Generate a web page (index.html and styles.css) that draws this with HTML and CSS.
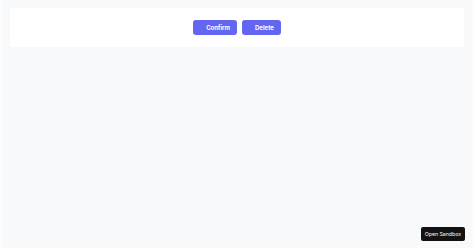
FILE: index.html
```html
<!DOCTYPE html>
<html lang="en">
<head>
  <meta charset="UTF-8">
  <meta name="viewport" content="width=device-width, initial-scale=1.0">
  <title>Buttons</title>
  <link rel="stylesheet" href="styles.css">
</head>
<body>
  <div id="app">
    <div class="card">
      <button class="btn">Confirm</button>
      <button class="btn">Delete</button>
    </div>
  </div>

  <a class="sandbox-link" href="#">Open Sandbox</a>
</body>
</html>
```

FILE: styles.css
```css
body {
  margin: 0;
  font-family: Inter, 'Liberation Sans', sans-serif;
  background: #fdfdfe;
  height: 100vh;
  overflow: hidden;
}
#app {
  box-sizing: border-box;
  margin: 0 2px;
  height: 100%;
  padding: 8px 8px;
  background: #f8f9fb;
}
.card {
  display: flex;
  justify-content: center;
  align-items: center;
  gap: 5px;
  height: 39px;
  background: #ffffff;
}
.btn {
  height: 15px;
  padding: 0 7px 0 13px;
  border: none;
  border-radius: 3px;
  background: #6366f1;
  color: #fff;
  font-family: inherit;
  font-size: 6px;
  font-weight: 700;
  line-height: 15px;
  cursor: pointer;
}
.sandbox-link {
  position: fixed;
  right: 9px;
  bottom: 7px;
  padding: 0 4px;
  height: 14px;
  line-height: 14px;
  border-radius: 2px;
  background: #121212;
  color: #fff;
  font-size: 5.2px;
  text-decoration: none;
}
```
